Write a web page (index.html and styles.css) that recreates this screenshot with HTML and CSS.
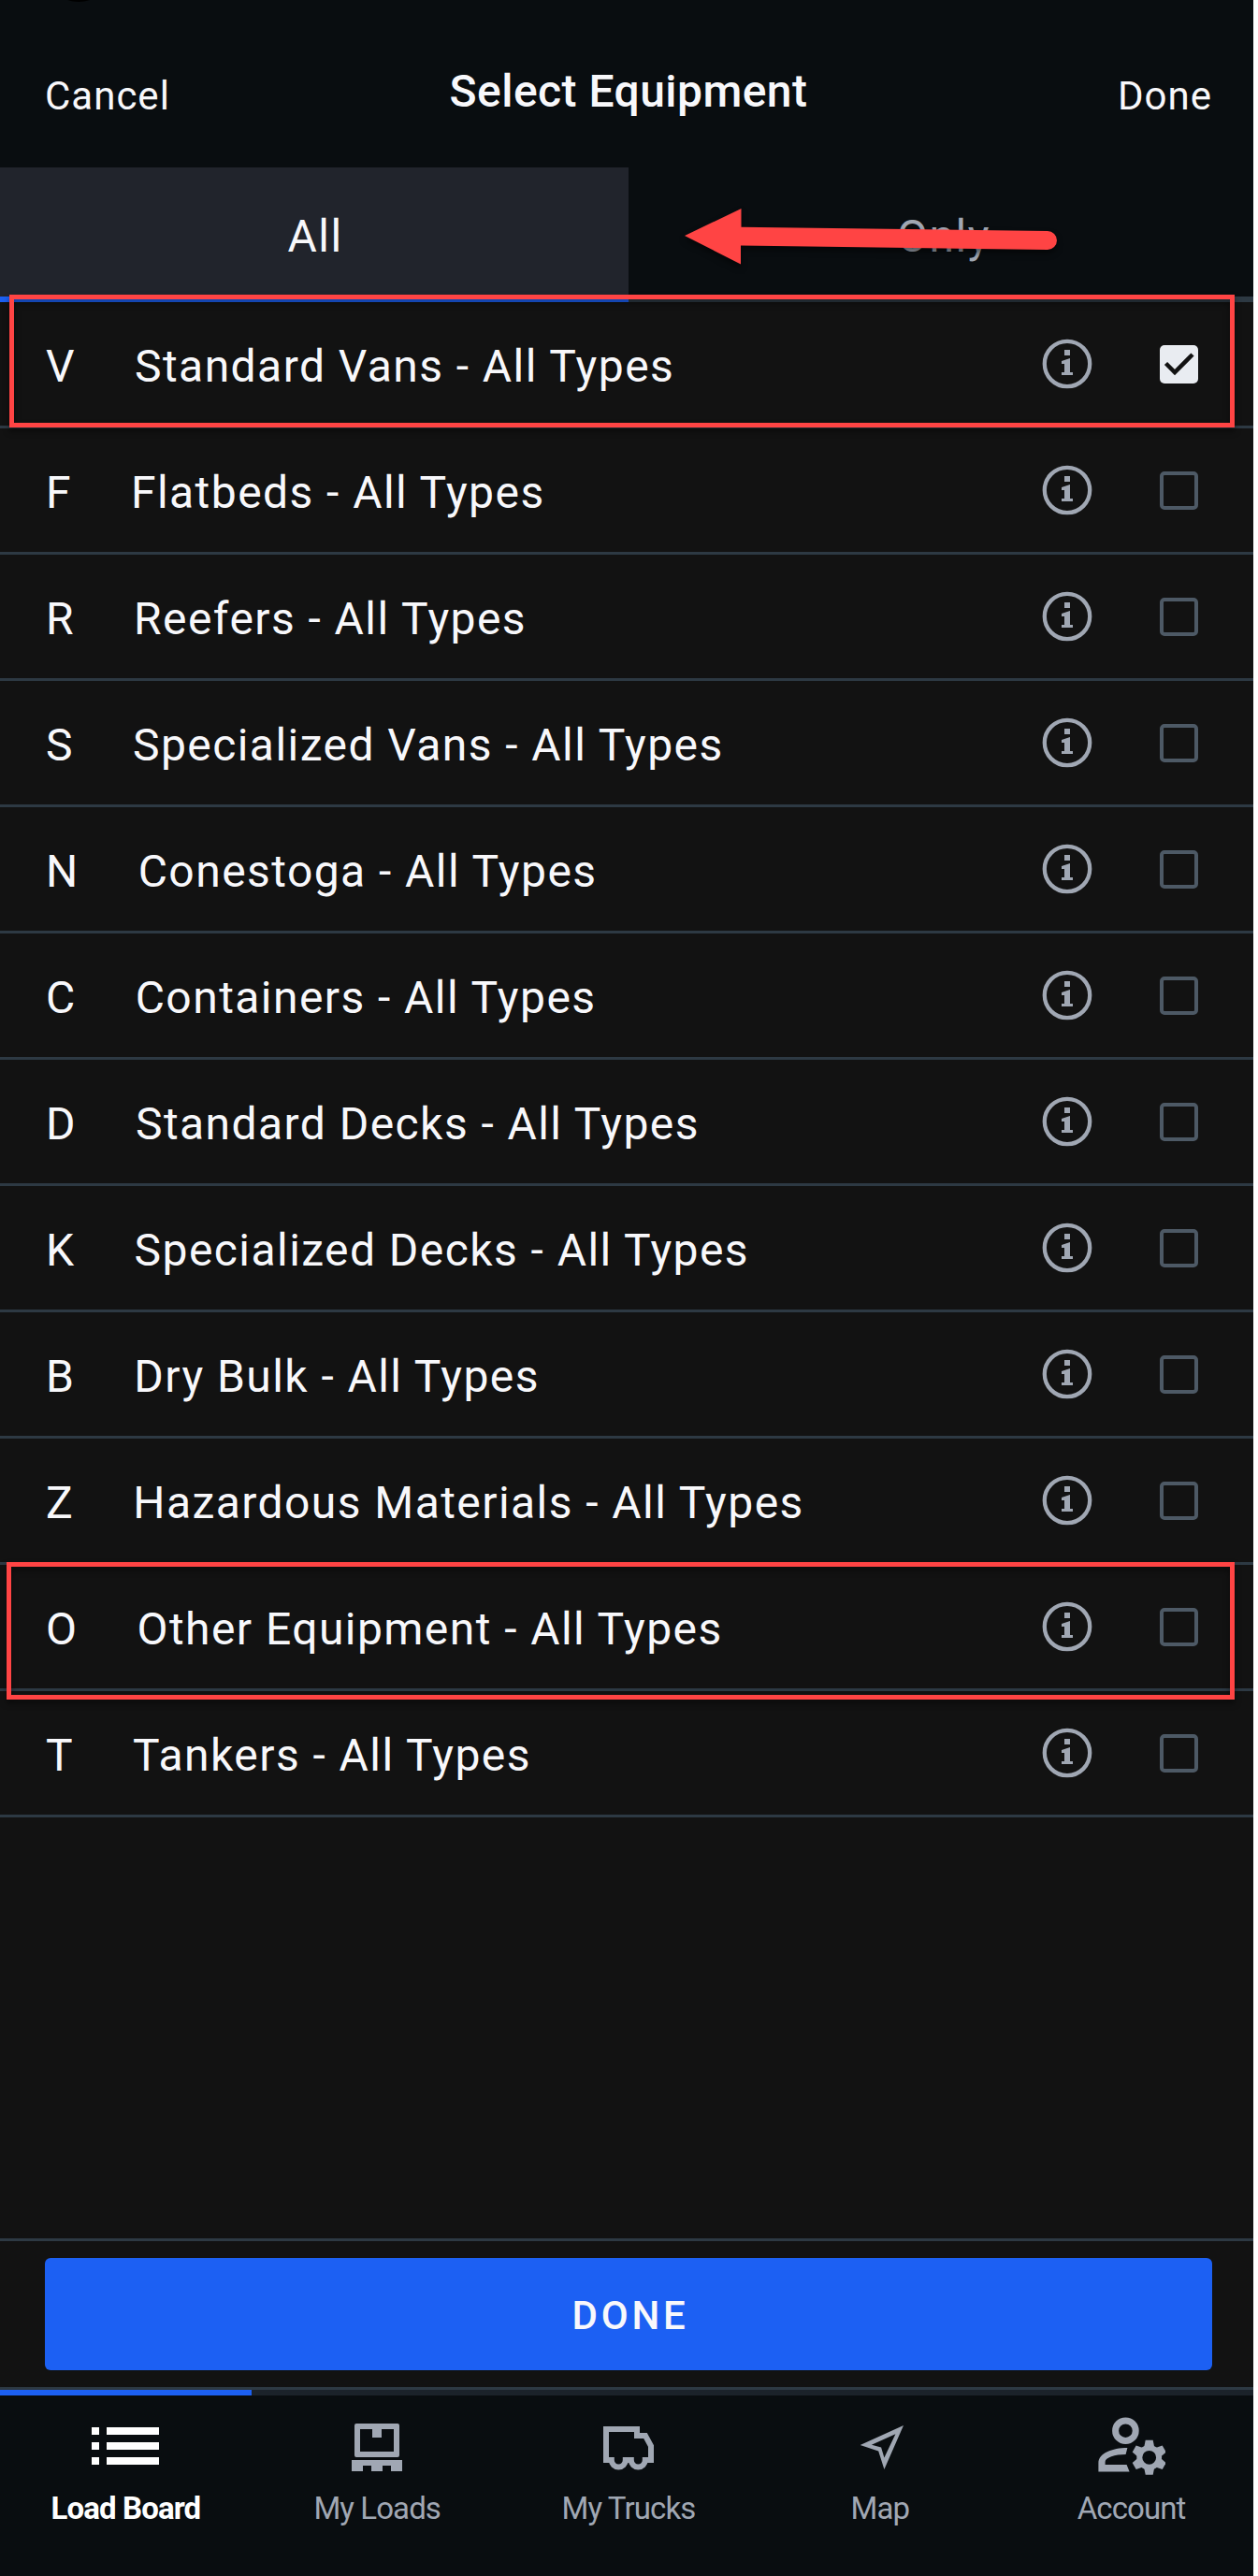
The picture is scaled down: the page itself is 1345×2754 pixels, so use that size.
FILE: index.html
```html
<!DOCTYPE html>
<html lang="en">
<head>
  <meta charset="UTF-8" />
  <meta name="viewport" content="width=device-width, initial-scale=1.0"/>
  <title>Select Equipment</title>
  <link rel="stylesheet" href="styles.css">
</head>
<body>
  <!-- Shared icons -->
  <svg class="sprite" aria-hidden="true">
    <symbol id="info" viewBox="0 0 54 54">
      <circle cx="27" cy="27" r="24.2" fill="none" stroke="currentColor" stroke-width="4.3"/>
      <path fill="currentColor" d="M24 12h6v6h-6zM30 21v15h3v3H21v-3h3v-9h-3v-3z"/>
    </symbol>
  </svg>

  <div class="screen">
    <div class="app">
      <span class="camera"></span>

      <header class="header">
        <button class="header-btn">Cancel</button>
        <h1>Select Equipment</h1>
        <button class="header-btn">Done</button>
      </header>

      <div class="tabs">
        <button class="tab active">All</button>
        <button class="tab">Only</button>
      </div>

      <ul class="list" id="equipment"></ul>

      <div class="footer">
        <button class="done-btn">DONE</button>
      </div>

      <nav class="nav">
        <a class="nav-item active">
          <svg width="72" height="72" viewBox="0 0 72 72" fill="currentColor">
            <path d="M0 20h8v8H0zM16 20h56v8H16zM0 36h8v8H0zM16 36h56v8H16zM0 52h8v8H0zM16 52h56v8H16z"/>
          </svg>
          <span>Load Board</span>
        </a>
        <a class="nav-item">
          <svg width="72" height="72" viewBox="0 0 72 72" fill="currentColor">
            <path fill-rule="evenodd" d="M14 16h44a2 2 0 0 1 2 2v32a2 2 0 0 1-2 2H14a2 2 0 0 1-2-2V18a2 2 0 0 1 2-2zM18 22v24h36V22H41v9H31v-9z"/>
            <path d="M9 55h54v12H51v-6h-9v6H30v-6h-9v6H9z"/>
          </svg>
          <span>My Loads</span>
        </a>
        <a class="nav-item">
          <svg width="72" height="72" viewBox="0 0 72 72" fill="none" stroke="currentColor" stroke-width="6">
            <path d="M12 22H45V29H54L60 40V55H53.8A7.5 7.5 0 0 1 38.8 55H32.8A7.5 7.5 0 0 1 17.8 55H12Z"/>
          </svg>
          <span>My Trucks</span>
        </a>
        <a class="nav-item">
          <svg width="72" height="72" viewBox="0 0 72 72" fill="currentColor">
            <path fill-rule="evenodd" d="M61 18L14.7 39l19.5 6.5 6.2 19.5zM52.4 27.3L40.4 52.5l-3.3-11-10.2-2.8z"/>
          </svg>
          <span>Map</span>
        </a>
        <a class="nav-item">
          <svg width="72" height="72" viewBox="0 0 72 72" fill="currentColor">
            <circle cx="29.4" cy="23.7" r="10.8" fill="none" stroke="currentColor" stroke-width="7"/>
            <path d="M31.4 42C15 42 .4 48 .4 58v9.5h33.2L30.6 60H7.6v-3C7.6 52.5 18 49 29.6 49z"/>
            <circle cx="54.7" cy="52.3" r="10.4" fill="none" stroke="currentColor" stroke-width="6"/>
            <g transform="translate(54.7 52.3)">
              <path id="tooth" d="M-5.5-11L-4-18.5h8L5.5-11z"/>
              <use href="#tooth" transform="rotate(60)"/>
              <use href="#tooth" transform="rotate(120)"/>
              <use href="#tooth" transform="rotate(180)"/>
              <use href="#tooth" transform="rotate(240)"/>
              <use href="#tooth" transform="rotate(300)"/>
            </g>
          </svg>
          <span>Account</span>
        </a>
      </nav>

      <!-- Callouts drawn over the app -->
      <div class="callout callout-vans"></div>
      <div class="callout callout-other"></div>
      <svg class="arrow" width="400" height="62" viewBox="0 0 400 62">
        <path d="M0 31L60.5 2V21.8L388 26a10 10 0 0 1 0 20L60 41.5V61.5z"/>
      </svg>
    </div>
  </div>

  <script>
    const equipment = [
      ["V", "Standard Vans", true],
      ["F", "Flatbeds"],
      ["R", "Reefers"],
      ["S", "Specialized Vans"],
      ["N", "Conestoga"],
      ["C", "Containers"],
      ["D", "Standard Decks"],
      ["K", "Specialized Decks"],
      ["B", "Dry Bulk"],
      ["Z", "Hazardous Materials"],
      ["O", "Other Equipment"],
      ["T", "Tankers"]
    ];

    const check = '<svg width="41" height="41" viewBox="0 0 41 41"><path d="M6.5 19.5L16 29 35 10"/></svg>';

    document.getElementById('equipment').innerHTML = equipment.map(([code, name, checked]) => `
      <li class="row">
        <span class="code">${code}</span>
        <span class="name">${name} - All Types</span>
        <svg class="info" width="54" height="54"><use href="#info"/></svg>
        <span class="checkbox${checked ? ' checked' : ''}">${checked ? check : ''}</span>
      </li>`).join('');
  </script>
</body>
</html>
```
FILE: styles.css
```css
:root {
  --primary: #1c60f3;
  --bar: #090d10;
  --background: #121212;
  --tab-active: #21242c;
  --border: #2d3943;
  --text: #f8f8fb;
  --text-muted: #a0a7b3;
  --callout: #ff4444;
}

* {
  box-sizing: border-box;
  margin: 0;
  padding: 0;
}

body {
  font-family: Roboto, "Liberation Sans", sans-serif;
  background: #fff;
  color: var(--text);
}

button {
  font-family: inherit;
  color: inherit;
  background: none;
  border: none;
}

.sprite {
  display: none;
}

.screen {
  width: 1340px;
  height: 2754px;
  overflow: hidden;
}

.app {
  position: relative;
  width: 1344px;
  height: 2754px;
  display: flex;
  flex-direction: column;
  background: var(--background);
}

.camera {
  position: absolute;
  left: 47px;
  top: -72px;
  width: 74px;
  height: 74px;
  border-radius: 50%;
  background: #000;
}

/* Header */
.header {
  height: 179px;
  padding: 25px 48px 0;
  display: grid;
  grid-template-columns: 1fr auto 1fr;
  align-items: center;
  background: var(--bar);
}

.header-btn {
  font-size: 42px;
  letter-spacing: 1px;
  justify-self: start;
}

.header-btn:last-child {
  justify-self: end;
}

h1 {
  font-size: 48px;
  font-weight: 500;
  line-height: 56px;
  letter-spacing: 0.45px;
  margin-bottom: 8px;
}

/* Tabs */
.tabs {
  display: flex;
  height: 144px;
  background: var(--bar);
}

.tab {
  flex: 1;
  padding: 8px 0 0 2px;
  font-size: 48px;
  letter-spacing: 1.5px;
  color: var(--text-muted);
  border-bottom: 6px solid var(--border);
}

.tab.active {
  color: var(--text);
  background: var(--tab-active);
  border-bottom-color: var(--primary);
}

/* Equipment list */
.list {
  flex: 1;
  list-style: none;
}

.row {
  height: 135px;
  padding: 0 63px 0 49px;
  display: flex;
  align-items: center;
  font-size: 48px;
  letter-spacing: 1.44px;
  border-bottom: 3px solid var(--border);
}

.code,
.name {
  padding-top: 4px;
}

.code {
  margin-right: 63px;
}

.name {
  flex: 1;
}

.info {
  color: var(--text-muted);
  margin-right: 72px;
}

.checkbox {
  width: 41px;
  height: 41px;
  border: 4px solid #4d5965;
  border-radius: 5px;
}

.checkbox.checked {
  border: none;
  background: #e9ecf1;
}

.checkbox svg {
  display: block;
  fill: none;
  stroke: var(--background);
  stroke-width: 4.5;
}

/* Footer button */
.footer {
  padding: 18px 48px;
  border-top: 3px solid var(--border);
  border-bottom: 3px solid var(--border);
}

.done-btn {
  display: block;
  width: 100%;
  height: 120px;
  padding: 3px 0 0 4px;
  font-size: 42px;
  font-weight: 500;
  letter-spacing: 3.75px;
  border-radius: 6px;
  background: var(--primary);
}

/* Bottom navigation */
.nav {
  display: flex;
  height: 199px;
  background: var(--bar);
}

.nav-item {
  flex: 1;
  display: flex;
  flex-direction: column;
  align-items: center;
  padding-top: 14px;
  font-size: 33px;
  line-height: 40px;
  letter-spacing: -0.9px;
  color: var(--text-muted);
  border-top: 6px solid #1b222a;
}

.nav-item span {
  margin-top: 15px;
}

.nav-item.active {
  color: #fff;
  font-weight: 700;
  border-top-color: var(--primary);
}

/* Callouts */
.callout {
  position: absolute;
  border: 5px solid var(--callout);
  filter: drop-shadow(0 4px 3px rgba(0, 0, 0, 0.5));
}

.callout-vans {
  left: 10px;
  top: 315px;
  width: 1310px;
  height: 142px;
}

.callout-other {
  left: 7px;
  top: 1670px;
  width: 1313px;
  height: 147px;
}

.arrow {
  position: absolute;
  left: 732px;
  top: 221px;
  fill: var(--callout);
  filter: drop-shadow(0 4px 3px rgba(0, 0, 0, 0.5));
}
```
